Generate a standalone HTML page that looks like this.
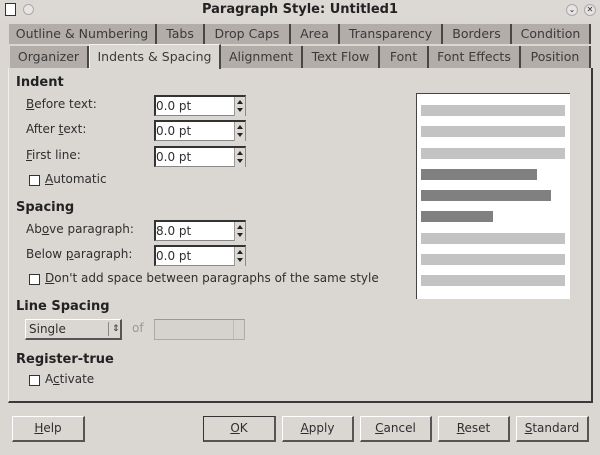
<!DOCTYPE html>
<html><head><style>
*{margin:0;padding:0;box-sizing:border-box}
body{width:600px;height:455px;background:#dad7d3;font-family:"DejaVu Sans","Liberation Sans",sans-serif;font-size:12px;color:#2e2e2e;position:relative;overflow:hidden}
.a{position:absolute;white-space:nowrap}
.tab{position:absolute;background:#b3ada9;border-right:2px solid #4a4645;text-align:center;font-size:12.5px;color:#3a3a3a;line-height:20px}
.r1{top:24px;height:20px}
.r2{top:46px;height:22px;line-height:21px}
.act{background:#dad7d3;border:1px solid #f4f2f0;border-bottom:none;border-right:2px solid #4a4645;top:44px;height:25px;line-height:23px}
.panel{position:absolute;left:8px;top:68px;width:585px;height:335px;border-left:1px solid #f0eeec;border-right:2px solid #3a3838;border-bottom:2px solid #3a3838}
.h{position:absolute;font-weight:bold;font-size:13px;color:#222}
.lbl{position:absolute;font-size:12px}
.spin{position:absolute;left:154px;width:92px;height:21px;background:#fff;border:1px solid #888;border-top:2px solid #333;border-left:2px solid #333;font-size:12px;line-height:18px}
.spin b{position:absolute;right:0;top:0;width:11px;height:19px;background:#dcd9d5;border-left:1px solid #999}
.spin b:before{content:"";position:absolute;left:2px;top:3px;border:3px solid transparent;border-bottom:4px solid #222;border-top:none}
.spin b:after{content:"";position:absolute;left:2px;top:11px;border:3px solid transparent;border-top:4px solid #222;border-bottom:none}
.cb{position:absolute;width:11px;height:11px;border:1px solid #333;background:#fff}
.btn{position:absolute;top:416px;height:26px;border:1px solid #fff;border-right:2px solid #555;border-bottom:2px solid #555;text-align:center;line-height:23px;font-size:12px;background:#dad7d3}
.bar{position:absolute;left:421px;height:11px;background:#c3c3c3}
.dk{background:#808080}
</style></head><body>
<div class="a" style="left:0;top:0;width:600px;height:20px;background:#dcd9d5"></div>
<div class="a" style="left:5px;top:3px;width:11px;height:13px;border:1px solid #333;background:#fff"></div>
<div class="a" style="left:23px;top:4px;width:11px;height:11px;border-radius:50%;background:#e8e6e4;border:1px solid #aaa"></div>
<div class="a" style="left:0;top:2px;width:600px;text-align:center;font-weight:bold;font-size:13px;color:#222">Paragraph Style: Untitled1</div>
<div class="a" style="left:566px;top:4px;width:12px;height:12px;border-radius:50%;background:#e6e4e2;border:1px solid #aaa;font-size:8px;line-height:10px;text-align:center">⌄</div>
<div class="a" style="left:584px;top:4px;width:12px;height:12px;border-radius:50%;background:#e6e4e2;border:1px solid #aaa;font-size:8px;line-height:10px;text-align:center">✕</div>

<div class="tab r1" style="left:9px;width:148px">Outline &amp; Numbering</div>
<div class="tab r1" style="left:157px;width:48px">Tabs</div>
<div class="tab r1" style="left:205px;width:86px">Drop Caps</div>
<div class="tab r1" style="left:291px;width:49px">Area</div>
<div class="tab r1" style="left:340px;width:103px">Transparency</div>
<div class="tab r1" style="left:443px;width:69px">Borders</div>
<div class="tab r1" style="left:512px;width:79px">Condition</div>

<div class="tab r2" style="left:10px;width:79px">Organizer</div>
<div class="tab r2" style="left:221px;width:82px">Alignment</div>
<div class="tab r2" style="left:303px;width:77px">Text Flow</div>
<div class="tab r2" style="left:380px;width:49px">Font</div>
<div class="tab r2" style="left:429px;width:92px">Font Effects</div>
<div class="tab r2" style="left:521px;width:70px">Position</div>
<div class="panel"></div>
<div class="tab act" style="left:89px;width:132px">Indents &amp; Spacing</div>

<div class="h" style="left:16px;top:75px">Indent</div>
<div class="lbl" style="left:26px;top:97px"><u>B</u>efore text:</div>
<div class="lbl" style="left:26px;top:122px">After <u>t</u>ext:</div>
<div class="lbl" style="left:26px;top:148px"><u>F</u>irst line:</div>
<div class="spin" style="top:95px">0.0 pt<b></b></div>
<div class="spin" style="top:120px">0.0 pt<b></b></div>
<div class="spin" style="top:146px">0.0 pt<b></b></div>
<div class="cb" style="left:29px;top:175px"></div>
<div class="lbl" style="left:45px;top:172px"><u>A</u>utomatic</div>

<div class="h" style="left:16px;top:200px">Spacing</div>
<div class="lbl" style="left:26px;top:222px">Ab<u>o</u>ve paragraph:</div>
<div class="lbl" style="left:26px;top:247px">Below <u>p</u>aragraph:</div>
<div class="spin" style="top:220px">8.0 pt<b></b></div>
<div class="spin" style="top:245px">0.0 pt<b></b></div>
<div class="cb" style="left:29px;top:274px"></div>
<div class="lbl" style="left:45px;top:271px"><u>D</u>on't add space between paragraphs of the same style</div>

<div class="h" style="left:16px;top:299px">Line Spacing</div>
<div class="a" style="left:25px;top:319px;width:97px;height:21px;border:1px solid #fff;border-right:2px solid #555;border-bottom:2px solid #555;font-size:12px;line-height:18px;padding-left:3px">Single<span style="position:absolute;left:82px;top:2px;width:1px;height:14px;background:#888"></span><span style="position:absolute;left:86px;top:0;font-size:9px">⇕</span></div>
<div class="lbl" style="left:132px;top:321px;color:#9a9896">of</div>
<div class="a" style="left:154px;top:319px;width:91px;height:21px;border:1px solid #aaa;border-top:1px solid #999;background:#d6d3cf"><span style="position:absolute;right:0;top:0;width:11px;height:19px;border-left:1px solid #bbb"></span></div>

<div class="h" style="left:16px;top:352px">Register-true</div>
<div class="cb" style="left:29px;top:375px"></div>
<div class="lbl" style="left:45px;top:372px">A<u>c</u>tivate</div>

<div class="a" style="left:416px;top:93px;width:154px;height:206px;background:#fff;border-top:1px solid #444;border-left:1px solid #444"></div>
<div class="bar" style="top:105px;width:144px"></div>
<div class="bar" style="top:126px;width:144px"></div>
<div class="bar" style="top:148px;width:144px"></div>
<div class="bar dk" style="top:169px;width:116px"></div>
<div class="bar dk" style="top:190px;width:130px"></div>
<div class="bar dk" style="top:211px;width:72px"></div>
<div class="bar" style="top:233px;width:144px"></div>
<div class="bar" style="top:254px;width:144px"></div>
<div class="bar" style="top:275px;width:144px"></div>

<div class="btn" style="left:12px;width:73px"><u>H</u>elp</div>
<div class="btn" style="left:203px;width:73px;border-top:1px solid #333;border-left:1px solid #333"><u>O</u>K</div>
<div class="btn" style="left:282px;width:72px"><u>A</u>pply</div>
<div class="btn" style="left:360px;width:72px"><u>C</u>ancel</div>
<div class="btn" style="left:438px;width:72px"><u>R</u>eset</div>
<div class="btn" style="left:516px;width:73px"><u>S</u>tandard</div>
</body></html>
